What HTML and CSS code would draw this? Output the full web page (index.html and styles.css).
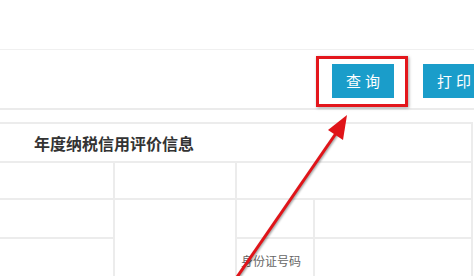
FILE: index.html
```html
<!DOCTYPE html>
<html lang="zh">
<head>
<meta charset="utf-8">
<link rel="stylesheet" href="styles.css">
</head>
<body>
<div class="page">
  <div class="toolbar">
    <button class="btn">查询</button>
    <button class="btn">打印</button>
  </div>
  <table class="info">
    <colgroup>
      <col class="c1"><col class="c2"><col class="c3"><col class="c4">
    </colgroup>
    <tr class="r-title"><td colspan="4" class="title">年度纳税信用评价信息</td></tr>
    <tr class="r1"><td></td><td></td><td colspan="2"></td></tr>
    <tr class="r2"><td></td><td rowspan="2"></td><td></td><td></td></tr>
    <tr class="r3"><td></td><td class="label">身份证号码</td><td></td></tr>
  </table>
  <div class="highlight"></div>
  <svg class="arrow" width="474" height="276" viewBox="0 0 474 276">
    <line x1="235" y1="280" x2="339" y2="129" class="shaft"/>
    <polygon points="347,115 343,140 328,130" class="head"/>
  </svg>
</div>
</body>
</html>
```
FILE: styles.css
```css
html, body {
  margin: 0;
  padding: 0;
  background: #fff;
}
body {
  width: 474px;
  height: 276px;
  overflow: hidden;
  font-family: "Noto Sans CJK SC", "Microsoft YaHei", sans-serif;
}
.page {
  position: relative;
  width: 474px;
  height: 276px;
  overflow: hidden;
}
.toolbar {
  margin-top: 49px;
  border-top: 1px solid #f0f0f0;
  border-bottom: 2px solid #ebebeb;
  padding: 14px 0 10px 332px;
  display: flex;
  gap: 29px;
  white-space: nowrap;
  width: 600px;
}
.btn {
  flex: none;
  width: 62px;
  height: 34px;
  border: 0;
  background: #1a9dca;
  color: #fff;
  font-family: "Noto Sans CJK SC", sans-serif;
  font-size: 15px;
  letter-spacing: 4px;
  padding: 0 0 0 4px;
  line-height: 34px;
}
.info {
  margin-top: 12px;
  margin-left: -10px;
  border-collapse: collapse;
  table-layout: fixed;
  width: 481px;
}
.info col.c1 { width: 123px; }
.info col.c2 { width: 122px; }
.info col.c3 { width: 78px; }
.info col.c4 { width: 158px; }
.info td {
  border: 2px solid #ececec;
  padding: 0;
}
.r-title td { height: 37px; }
.r1 td { height: 35px; }
.r2 td { height: 37px; }
.r3 td { height: 35px; }
.title {
  padding-left: 42px !important;
  font-size: 16px;
  font-weight: bold;
  color: #333;
  text-align: left;
}
.label {
  font-size: 12px;
  color: #666;
  padding-left: 4px !important;
  padding-top: 4px !important;
}
.highlight {
  position: absolute;
  left: 316px;
  top: 56px;
  width: 86px;
  height: 45px;
  border: 3px solid #e3161c;
  box-shadow: 1px 1px 3px rgba(0,0,0,0.35);
}
.arrow {
  position: absolute;
  left: 0;
  top: 0;
}
.shaft {
  stroke: #e01419;
  stroke-width: 3;
  filter: drop-shadow(1px 1px 1px rgba(0,0,0,0.4));
}
.head {
  fill: #e01419;
}
```
